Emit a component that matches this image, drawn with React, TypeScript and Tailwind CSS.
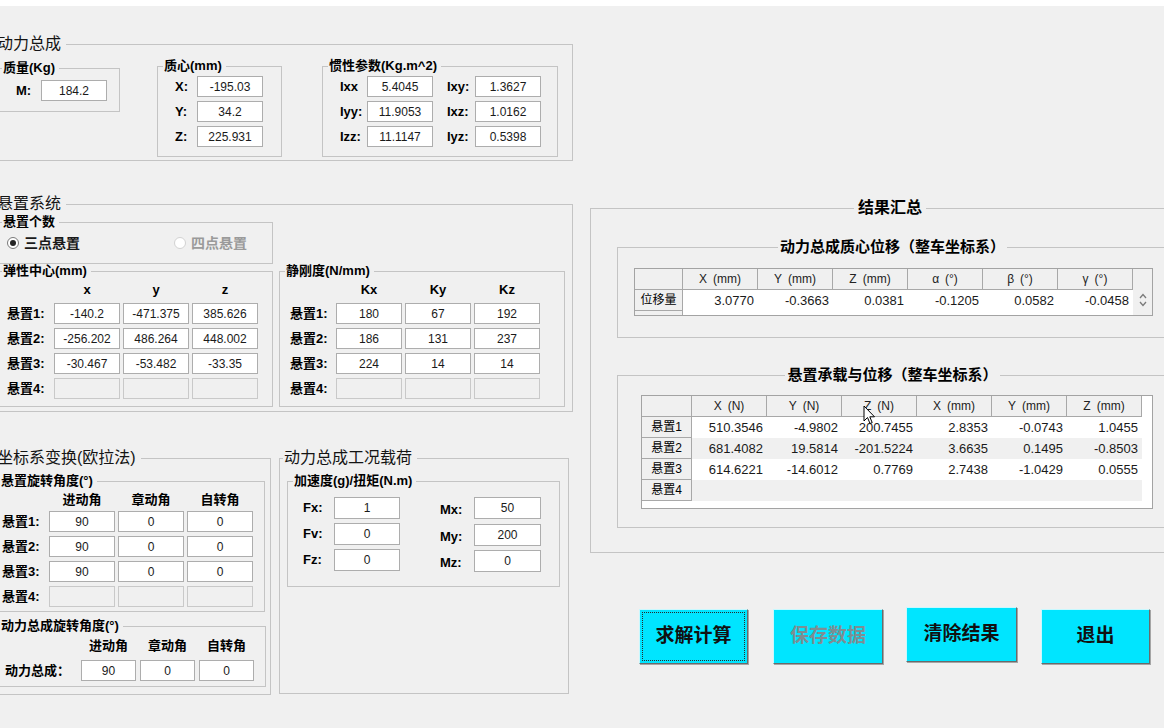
import type { ReactNode } from "react";

const big = "ml-[5px] pl-[1px] pr-[5px] text-[16px] leading-[20px] text-[#141414]";
const small = "ml-[5px] pl-[1px] pr-[4px] text-[13px] leading-[16px] font-bold";
const lbl = "shrink-0 text-[13px] font-bold";

function Group({ title, legend, className, children }: { title: string; legend: string; className: string; children?: ReactNode }) {
  return (
    <fieldset className={`shrink-0 min-w-0 border border-[#c4c4c4] ${className}`}>
      <legend className={legend}>{title}</legend>
      {children}
    </fieldset>
  );
}

function Field({ value = "", className = "w-[66px] h-[21px]", off = false }: { value?: string; className?: string; off?: boolean }) {
  return (
    <div className={`shrink-0 flex items-center justify-center text-[12px] text-[#1a1a1a] border ${off ? "bg-[#f0f0f0] border-[#c9c9c9]" : "bg-white border-[#adadad]"} ${className}`}>
      {value}
    </div>
  );
}

function Radio({ on, label }: { on: boolean; label: string }) {
  return (
    <div className="flex items-center gap-[5px]">
      <span className={`w-[12px] h-[12px] rounded-full border bg-white flex items-center justify-center ${on ? "border-[#7a7a7a]" : "border-[#d2d2d2]"}`}>
        {on && <span className="w-[6px] h-[6px] rounded-full bg-[#252525]" />}
      </span>
      <span className={`text-[14px] font-bold ${on ? "text-[#1a1a1a]" : "text-[#9a9a9a]"}`}>{label}</span>
    </div>
  );
}

function Btn({ label, className, dim = false, focus = false }: { label: string; className: string; dim?: boolean; focus?: boolean }) {
  return (
    <div className={`h-[55px] shrink-0 flex p-[2px] bg-[#00e5ff] border border-t-[#c8f9ff] border-l-[#c8f9ff] border-r-[#6a6a6a] border-b-[#6a6a6a] shadow-[1px_1px_0_#a5a5a5] ${className}`}>
      <div className={`flex-1 flex items-center justify-center text-[19px] font-bold ${focus ? "border border-dotted border-[#2a2a2a]" : ""} ${dim ? "text-[#7d8e92]" : "text-[#111]"}`}>
        {label}
      </div>
    </div>
  );
}

const elastic = [
  ["-140.2", "-471.375", "385.626"],
  ["-256.202", "486.264", "448.002"],
  ["-30.467", "-53.482", "-33.35"],
];
const stiff = [
  ["180", "67", "192"],
  ["186", "131", "237"],
  ["224", "14", "14"],
];
const mountLoad = [
  ["510.3546", "-4.9802", "200.7455", "2.8353", "-0.0743", "1.0455"],
  ["681.4082", "19.5814", "-201.5224", "3.6635", "0.1495", "-0.8503"],
  ["614.6221", "-14.6012", "0.7769", "2.7438", "-1.0429", "0.0555"],
  ["", "", "", "", "", ""],
];

function MountGrid({ heads, rows, labelW, pl }: { heads: string[]; rows: string[][]; labelW: string; pl: string }) {
  return (
    <div className={`flex flex-col ${pl}`}>
      <div className="flex mt-[1px] h-[20px] items-center">
        <div className={`shrink-0 ${labelW}`} />
        <div className="flex gap-[3px]">
          {heads.map((h) => (
            <div key={h} className="w-[66px] text-center text-[13px] font-bold">{h}</div>
          ))}
        </div>
      </div>
      <div className="flex flex-col gap-[4px] mt-[3px]">
        {[0, 1, 2, 3].map((i) => (
          <div key={i} className="flex items-center">
            <span className={`${lbl} ${labelW}`}>悬置{i + 1}:</span>
            <div className="flex gap-[3px]">
              {[0, 1, 2].map((j) => (
                <Field key={j} value={rows[i]?.[j] ?? ""} off={i === 3} />
              ))}
            </div>
          </div>
        ))}
      </div>
    </div>
  );
}

export default function App() {
  return (
    <div className="relative w-[1164px] h-[728px] overflow-hidden bg-[#f0f0f0] text-black font-['Liberation_Sans','Noto_Sans_CJK_SC',sans-serif]">
      <div className="h-[6px] bg-white" />
      <div className="flex items-start">
        {/* left column */}
        <div className="-ml-[10px] w-[583px] shrink-0 flex flex-col">
          <Group title="动力总成" legend={big} className="w-full mt-[28px] h-[127px]">
            <div className="flex items-start pl-[5px]">
              <Group title="质量(Kg)" legend={small} className="mt-[6px] w-[124px] h-[52px]">
                <div className="mt-[4px] pl-[19px] flex items-center">
                  <span className={`${lbl} w-[25px]`}>M:</span>
                  <Field value="184.2" />
                </div>
              </Group>
              <Group title="质心(mm)" legend={small} className="mt-[4px] ml-[37px] w-[125px] h-[99px]">
                <div className="mt-[2px] pl-[17px] flex flex-col gap-[4px]">
                  {[["X:", "-195.03"], ["Y:", "34.2"], ["Z:", "225.931"]].map(([k, v]) => (
                    <div key={k} className="flex items-center">
                      <span className={`${lbl} w-[22px]`}>{k}</span>
                      <Field value={v} />
                    </div>
                  ))}
                </div>
              </Group>
              <Group title="惯性参数(Kg.m^2)" legend={small} className="mt-[4px] ml-[40px] w-[236px] h-[99px]">
                <div className="mt-[2px] pl-[17px] flex flex-col gap-[4px]">
                  {[
                    ["Ixx", "5.4045", "Ixy:", "1.3627"],
                    ["Iyy:", "11.9053", "Ixz:", "1.0162"],
                    ["Izz:", "11.1147", "Iyz:", "0.5398"],
                  ].map(([a, b, c, d]) => (
                    <div key={a} className="flex items-center">
                      <span className={`${lbl} w-[27px]`}>{a}</span>
                      <Field value={b} />
                      <span className={`${lbl} ml-[14px] w-[28px]`}>{c}</span>
                      <Field value={d} />
                    </div>
                  ))}
                </div>
              </Group>
            </div>
          </Group>

          <Group title="悬置系统" legend={big} className="w-full mt-[33px] h-[218px]">
            <div className="pl-[5px] flex flex-col">
              <Group title="悬置个数" legend={small} className="w-[277px] h-[50px]">
                <div className="mt-[3px] h-[20px] pl-[10px] flex items-center">
                  <Radio on label="三点悬置" />
                  <div className="ml-[94px]">
                    <Radio on={false} label="四点悬置" />
                  </div>
                </div>
              </Group>
              <div className="flex items-start -mt-[1px]">
                <Group title="弹性中心(mm)" legend={small} className="w-[277px] h-[144px]">
                  <MountGrid heads={["x", "y", "z"]} rows={elastic} labelW="w-[47px]" pl="pl-[10px]" />
                </Group>
                <Group title="静刚度(N/mm)" legend={small} className="ml-[6px] w-[286px] h-[144px]">
                  <MountGrid heads={["Kx", "Ky", "Kz"]} rows={stiff} labelW="w-[46px]" pl="pl-[10px]" />
                </Group>
              </div>
            </div>
          </Group>

          <div className="flex items-start mt-[36px]">
            <Group title="坐标系变换(欧拉法)" legend={big} className="w-[281px] h-[247px]">
              <div className="pl-[3px] flex flex-col">
                <Group title="悬置旋转角度(°)" legend={small} className="mt-[5px] w-[271px] h-[139px]">
                  <div className="pl-[7px] flex flex-col">
                    <div className="flex mt-[1px] h-[20px] items-center">
                      <div className="w-[47px] shrink-0" />
                      <div className="flex gap-[3px]">
                        {["进动角", "章动角", "自转角"].map((h) => (
                          <div key={h} className="w-[66px] text-center text-[13px] font-bold">{h}</div>
                        ))}
                      </div>
                    </div>
                    <div className="flex flex-col gap-[4px] mt-[1px]">
                      {[0, 1, 2, 3].map((i) => (
                        <div key={i} className="flex items-center">
                          <span className={`${lbl} w-[47px]`}>悬置{i + 1}:</span>
                          <div className="flex gap-[3px]">
                            <Field value={i < 3 ? "90" : ""} off={i === 3} />
                            <Field value={i < 3 ? "0" : ""} off={i === 3} />
                            <Field value={i < 3 ? "0" : ""} off={i === 3} />
                          </div>
                        </div>
                      ))}
                    </div>
                  </div>
                </Group>
                <Group title="动力总成旋转角度(°)" legend={small} className="mt-[6px] w-[272px] h-[69px]">
                  <div className="pl-[10px] flex flex-col">
                    <div className="flex mt-[2px] h-[20px] items-center">
                      <div className="w-[76px] shrink-0" />
                      <div className="flex gap-[4px]">
                        {["进动角", "章动角", "自转角"].map((h) => (
                          <div key={h} className="w-[55px] text-center text-[13px] font-bold">{h}</div>
                        ))}
                      </div>
                    </div>
                    <div className="flex items-center mt-[4px]">
                      <span className={`${lbl} w-[76px]`}>动力总成：</span>
                      <div className="flex gap-[4px]">
                        <Field value="90" className="w-[55px] h-[21px]" />
                        <Field value="0" className="w-[55px] h-[21px]" />
                        <Field value="0" className="w-[55px] h-[21px]" />
                      </div>
                    </div>
                  </div>
                </Group>
              </div>
            </Group>

            <Group title="动力总成工况载荷" legend="ml-[3px] pl-[1px] pr-[5px] text-[16px] leading-[20px] text-[#141414]" className="ml-[8px] w-[290px] h-[246px]">
              <Group title="加速度(g)/扭矩(N.m)" legend={small} className="mt-[5px] ml-[7px] w-[273px] h-[114px]">
                <div className="pl-[15px] mt-[8px] flex">
                  <div className="flex flex-col gap-[4px]">
                    {[["Fx:", "1"], ["Fv:", "0"], ["Fz:", "0"]].map(([k, v]) => (
                      <div key={k} className="flex items-center">
                        <span className={`${lbl} w-[31px]`}>{k}</span>
                        <Field value={v} className="w-[66px] h-[22px]" />
                      </div>
                    ))}
                  </div>
                  <div className="ml-[40px] flex flex-col gap-[4px]">
                    {[["Mx:", "50"], ["My:", "200"], ["Mz:", "0"]].map(([k, v]) => (
                      <div key={k} className="flex items-center">
                        <span className={`${lbl} w-[34px] pt-[3px]`}>{k}</span>
                        <Field value={v} className="w-[67px] h-[22px]" />
                      </div>
                    ))}
                  </div>
                </div>
              </Group>
            </Group>
          </div>
        </div>

        {/* right column */}
        <div className="ml-[17px] w-[600px] shrink-0 flex flex-col">
          <Group title="结果汇总" legend="mx-auto px-[4px] text-[16px] leading-[20px] font-bold" className="w-full mt-[192px] h-[355px]">
            <Group title="动力总成质心位移（整车坐标系）" legend="mx-auto px-[2px] text-[15px] leading-[20px] font-bold" className="mt-[19px] ml-[26px] w-[551px] h-[101px]">
              <div className="mt-[11px] ml-[16px] w-[519px] h-[48px] border border-[#a3a3a3] bg-white flex">
                <div className="w-[498px] flex flex-col">
                  <div className="flex h-[21px] shrink-0 bg-[#f0f0f0]">
                    <div className="w-[48px] border-r border-b border-[#a8a8a8]" />
                    {["X\u2002(mm)", "Y\u2002(mm)", "Z\u2002(mm)", "α\u2002(°)", "β\u2002(°)", "γ\u2002(°)"].map((h) => (
                      <div key={h} className="w-[75px] border-r border-b border-[#a8a8a8] flex items-center justify-center text-[12px] text-[#222] whitespace-pre">{h}</div>
                    ))}
                  </div>
                  <div className="flex h-[21px] shrink-0">
                    <div className="w-[48px] bg-[#f0f0f0] border-r border-b border-[#a8a8a8] flex items-center justify-center text-[12px]">位移量</div>
                    {["3.0770", "-0.3663", "0.0381", "-0.1205", "0.0582", "-0.0458"].map((v) => (
                      <div key={v} className="w-[75px] flex items-center justify-end pr-[4px] text-[13px] text-[#1a1a1a]">{v}</div>
                    ))}
                  </div>
                  <div className="flex flex-1">
                    <div className="w-[48px] bg-[#f0f0f0] border-r border-[#a8a8a8]" />
                  </div>
                </div>
                <div className="flex-1 bg-[#f0f0f0] flex flex-col items-center pt-[24px] gap-[2px]">
                  <svg width="8" height="6" viewBox="0 0 8 6"><path d="M1 5 L4 1.5 L7 5" fill="none" stroke="#7a7a7a" strokeWidth="1.3" /></svg>
                  <svg width="8" height="6" viewBox="0 0 8 6"><path d="M1 1 L4 4.5 L7 1" fill="none" stroke="#7a7a7a" strokeWidth="1.3" /></svg>
                </div>
              </div>
            </Group>

            <Group title="悬置承载与位移（整车坐标系）" legend="mx-auto px-[2px] text-[15px] leading-[20px] font-bold" className="mt-[27px] ml-[26px] w-[551px] h-[163px]">
              <div className="mt-[10px] ml-[23px] w-[512px] h-[114px] border border-[#a3a3a3] bg-white flex flex-col">
                <div className="flex h-[21px] shrink-0">
                  <div className="w-[50px] bg-[#f0f0f0] border-r border-b border-[#a8a8a8]" />
                  {["X\u2002(N)", "Y\u2002(N)", "Z\u2002(N)", "X\u2002(mm)", "Y\u2002(mm)", "Z\u2002(mm)"].map((h) => (
                    <div key={h} className="w-[75px] bg-[#f0f0f0] border-r border-b border-[#a8a8a8] flex items-center justify-center text-[12px] text-[#222] whitespace-pre">{h}</div>
                  ))}
                </div>
                {mountLoad.map((r, i) => (
                  <div key={i} className="flex h-[21px] shrink-0">
                    <div className="w-[50px] bg-[#f0f0f0] border-r border-b border-[#a8a8a8] flex items-center justify-center text-[12px]">悬置{i + 1}</div>
                    <div className={`w-[450px] flex ${i % 2 === 1 ? "bg-[#f0f0f0]" : "bg-white"}`}>
                      {r.map((v, j) => (
                        <div key={j} className="w-[75px] flex items-center justify-end pr-[4px] text-[13px] text-[#1a1a1a]">{v}</div>
                      ))}
                    </div>
                  </div>
                ))}
              </div>
            </Group>
          </Group>

          <div className="flex items-start mt-[56px] ml-[49px]">
            <Btn label="求解计算" focus className="w-[109px]" />
            <Btn label="保存数据" dim className="ml-[25px] w-[110px]" />
            <Btn label="清除结果" className="ml-[23px] w-[111px] -mt-[2px]" />
            <Btn label="退出" className="ml-[24px] w-[109px]" />
          </div>
        </div>
      </div>

      {/* mouse pointer */}
      <svg className="absolute left-[863px] top-[405px]" width="13" height="20" viewBox="0 0 13 20">
        <path d="M1 1 L1 16 L4.5 12.5 L7 18.5 L9.2 17.6 L6.8 11.8 L11.5 11.8 Z" fill="#fff" stroke="#000" strokeWidth="1" strokeLinejoin="round" />
      </svg>
    </div>
  );
}
